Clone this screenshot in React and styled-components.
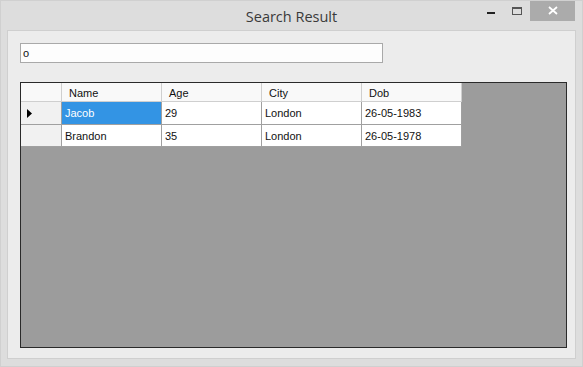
import React from "react";
import styled, { createGlobalStyle } from "styled-components";

const Global = createGlobalStyle`
  html, body { margin: 0; padding: 0; background: #dcdcdc; }
  #root { width: 583px; height: 367px; }
`;

const Window = styled.div`
  width: 583px;
  height: 367px;
  box-sizing: border-box;
  background: #dddddd;
  border: 1px solid #d0d0d0;
  display: flex;
  flex-direction: column;
  overflow: hidden;
`;

const TitleBar = styled.div`
  height: 29px;
  flex: none;
  position: relative;
  display: flex;
  align-items: center;
  justify-content: center;
`;

const Title = styled.div`
  font-family: "Open Sans", "Noto Sans", sans-serif;
  font-size: 14.5px;
  color: #3a3a3a;
  margin-top: 2px;
`;

const Controls = styled.div`
  position: absolute;
  right: 7px;
  top: -1px;
  display: flex;
  align-items: flex-start;
`;

const CtlBtn = styled.div`
  width: ${(p) => p.$w}px;
  height: 21px;
  display: flex;
  align-items: center;
  justify-content: center;
  background: ${(p) => (p.$close ? "#ababab" : "transparent")};
`;

const Client = styled.div`
  flex: 1;
  margin: 0 6px 7px 6px;
  border: 1px solid #cfcfcf;
  background: #ececec;
  padding: 12px 8px 10px 12px;
  display: flex;
  flex-direction: column;
  gap: 19px;
`;

const TextBox = styled.div`
  width: 363px;
  height: 20px;
  box-sizing: border-box;
  border: 1px solid #a9a9a9;
  background: #fdfdfd;
  font-family: "Liberation Sans", Arial, sans-serif;
  font-size: 11px;
  color: #111;
  padding: 3px 0 0 2px;
`;

const Grid = styled.div`
  flex: 1;
  border: 1px solid #2a2a2a;
  background: #9c9c9c;
  display: flex;
  flex-direction: column;
  align-items: flex-start;
`;

const Row = styled.div`
  display: flex;
  height: ${(p) => p.$h}px;
`;

const HeadCell = styled.div`
  width: ${(p) => p.$w}px;
  box-sizing: border-box;
  background: #f9f9f9;
  border-right: 1px solid #cfcfcf;
  border-bottom: 1px solid #cfcfcf;
  font-family: "Liberation Sans", Arial, sans-serif;
  font-size: 11px;
  color: #111;
  padding: 4px 0 0 7px;
`;

const RowHead = styled.div`
  width: 41px;
  box-sizing: border-box;
  background: #f1f1f1;
  border-right: 1px solid #a0a0a0;
  border-bottom: 1px solid #a0a0a0;
  display: flex;
  align-items: center;
  padding-left: 6px;
`;

const Cell = styled.div`
  width: 100px;
  box-sizing: border-box;
  background: ${(p) => (p.$sel ? "#3394e4" : "#ffffff")};
  color: ${(p) => (p.$sel ? "#ffffff" : "#111")};
  border-right: 1px solid #a0a0a0;
  border-bottom: 1px solid #a0a0a0;
  font-family: "Liberation Sans", Arial, sans-serif;
  font-size: 11px;
  padding: 5px 0 0 3px;
`;

const rows = [
  ["Jacob", "29", "London", "26-05-1983"],
  ["Brandon", "35", "London", "26-05-1978"],
];

export default function App() {
  return (
    <>
      <Global />
      <Window>
        <TitleBar>
          <Title>Search Result</Title>
          <Controls>
            <CtlBtn $w={26}>
              <svg width="10" height="10" viewBox="0 0 10 10">
                <rect x="1" y="6" width="8" height="2" fill="#222" />
              </svg>
            </CtlBtn>
            <CtlBtn $w={26}>
              <svg width="11" height="10" viewBox="0 0 11 10">
                <rect x="0.5" y="1.5" width="9" height="7" fill="none" stroke="#555" />
                <rect x="1" y="2" width="8" height="1" fill="#555" />
              </svg>
            </CtlBtn>
            <CtlBtn $w={45} $close>
              <svg width="10" height="9" viewBox="0 0 10 9">
                <path d="M1 1 L9 8 M9 1 L1 8" stroke="#fff" strokeWidth="1.8" />
              </svg>
            </CtlBtn>
          </Controls>
        </TitleBar>
        <Client>
          <TextBox>o</TextBox>
          <Grid>
            <Row $h={19}>
              <HeadCell $w={41} />
              <HeadCell $w={100}>Name</HeadCell>
              <HeadCell $w={100}>Age</HeadCell>
              <HeadCell $w={100}>City</HeadCell>
              <HeadCell $w={100}>Dob</HeadCell>
            </Row>
            {rows.map((r, i) => (
              <Row $h={i === 0 ? 23 : 22} key={i}>
                <RowHead>
                  {i === 0 && (
                    <svg width="5" height="9" viewBox="0 0 5 9">
                      <path d="M0 0 L5 4.5 L0 9 Z" fill="#000" />
                    </svg>
                  )}
                </RowHead>
                {r.map((c, j) => (
                  <Cell key={j} $sel={i === 0 && j === 0}>
                    {c}
                  </Cell>
                ))}
              </Row>
            ))}
          </Grid>
        </Client>
      </Window>
    </>
  );
}
